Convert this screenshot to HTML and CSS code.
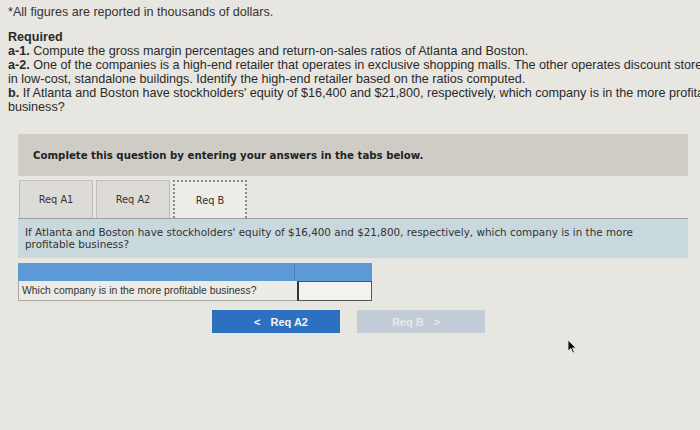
FILE: index.html
```html
<!DOCTYPE html>
<html>
<head>
<meta charset="utf-8">
<link rel="stylesheet" href="styles.css">
</head>
<body>
<div class="page">
  <div class="intro">
    <p class="note">*All figures are reported in thousands of dollars.</p>
    <p class="req-title">Required</p>
    <p class="line"><b>a-1.</b> Compute the gross margin percentages and return-on-sales ratios of Atlanta and Boston.</p>
    <p class="line"><b>a-2.</b> One of the companies is a high-end retailer that operates in exclusive shopping malls. The other operates discount stores</p>
    <p class="line">in low-cost, standalone buildings. Identify the high-end retailer based on the ratios computed.</p>
    <p class="line"><b>b.</b> If Atlanta and Boston have stockholders' equity of $16,400 and $21,800, respectively, which company is in the more profitable</p>
    <p class="line">business?</p>
  </div>

  <div class="banner">Complete this question by entering your answers in the tabs below.</div>

  <div class="tabs">
    <div class="tab">Req A1</div>
    <div class="tab">Req A2</div>
    <div class="tab active">Req B</div>
  </div>

  <div class="question">If Atlanta and Boston have stockholders' equity of $16,400 and $21,800, respectively, which company is in the more profitable business?</div>

  <div class="answer">
    <div class="ahead"><div class="hcell-a"></div><div class="hcell-b"></div></div>
    <div class="arow">
      <div class="alabel">Which company is in the more profitable business?</div>
      <div class="ainput"></div>
    </div>
  </div>

  <div class="nav">
    <div class="btn prev"><span class="chev">&lt;</span> Req A2</div>
    <div class="btn next">Req B <span class="chev">&gt;</span></div>
  </div>
</div>
<svg class="cursor" width="10" height="15" viewBox="0 0 10 15"><path d="M1 1 L1 12 L3.8 9.5 L5.8 14 L7.4 13.3 L5.5 9 L9 9 Z" fill="#111" stroke="#eee" stroke-width="0.8"/></svg>
</body>
</html>
```
FILE: styles.css
```css
html, body {
  margin: 0;
  padding: 0;
  width: 700px;
  height: 430px;
  overflow: hidden;
  background: #e8e6e1;
}
.page {
  padding: 5px 0 0 0;
  font-family: "Liberation Sans", Arial, sans-serif;
  color: #2a2a2a;
}
.intro {
  padding-left: 8px;
  font-size: 12.6px;
  line-height: 14px;
  white-space: nowrap;
}
.intro p { margin: 0; }
.note { margin-bottom: 11px !important; color: #333; }
.req-title { font-weight: bold; }

.banner {
  margin: 20px 12px 0 18px;
  height: 42px;
  background: #cfccc6;
  font-family: "DejaVu Sans", Verdana, sans-serif;
  font-weight: bold;
  font-size: 10.2px;
  color: #222;
  display: flex;
  align-items: center;
  padding-left: 15px;
}
.tabs {
  display: flex;
  gap: 3px;
  margin: 4px 0 0 19px;
  height: 38px;
}
.tab {
  width: 74px;
  display: flex;
  align-items: center;
  justify-content: center;
  background: #dddbd5;
  border: 1px solid #c2bfb9;
  border-bottom: none;
  box-sizing: border-box;
  font-family: "DejaVu Sans", Verdana, sans-serif;
  font-size: 9.8px;
  color: #333;
}
.tab.active {
  background: #eeece7;
  border: 2px dotted #8b8a86;
  border-bottom: none;
}
.question {
  margin: 0 12px 0 18px;
  height: 40px;
  box-sizing: border-box;
  background: #c9d8dc;
  border-top: 1px solid #9aa3a6;
  padding: 8px 30px 0 7px;
  font-family: "DejaVu Sans", Verdana, sans-serif;
  font-size: 10.4px;
  line-height: 11.5px;
  color: #333;
}
.answer {
  margin: 5px 0 0 18px;
  width: 354px;
}
.ahead {
  display: flex;
  height: 18px;
}
.hcell-a {
  width: 276px;
  background: #5c9ad6;
  border-right: 1px solid #4a7fb4;
}
.hcell-b {
  flex: 1;
  background: #5c9ad6;
}
.arow {
  display: flex;
  height: 20px;
  box-sizing: border-box;
  border: 1px solid #a7a7a3;
  border-top: none;
}
.alabel {
  width: 275px;
  display: flex;
  align-items: center;
  padding-left: 3px;
  font-size: 10.4px;
  color: #333;
  background: #ecebe6;
}
.ainput {
  flex: 1;
  border: 1px solid #555;
  border-left: 2px solid #333;
  background: #f3f2ee;
  margin: 0 -1px -1px 0;
}
.nav {
  display: flex;
  gap: 17px;
  margin: 9px 0 0 212px;
}
.btn {
  width: 128px;
  height: 23px;
  display: flex;
  align-items: center;
  justify-content: center;
  font-size: 11px;
  font-weight: bold;
}
.btn.prev {
  background: #2d70c0;
  color: #f2f5fa;
}
.btn.next {
  background: #c3cdd8;
  color: #e4e9ee;
}
.chev {
  font-weight: bold;
  margin: 0 10px;
}
.cursor {
  position: absolute;
  left: 567px;
  top: 339px;
}
```
